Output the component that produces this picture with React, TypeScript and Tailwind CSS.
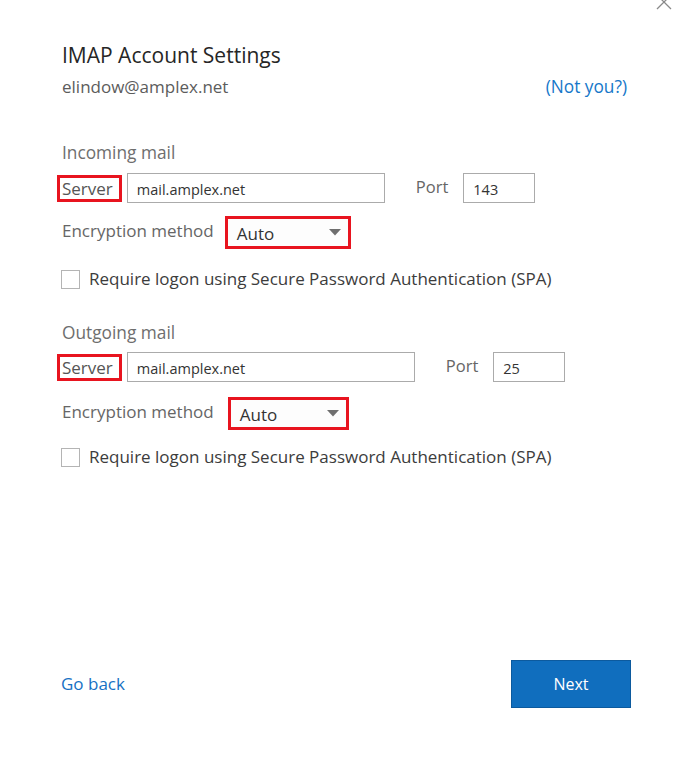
import React from "react";

const FONT = { fontFamily: '"Open Sans", "Noto Sans", "Liberation Sans", sans-serif' };

const RED = "border-[3px] border-[#e8141f]";

function ServerRow({ inputW, port }: { inputW: string; port: string }) {
  return (
    <div className="flex items-center h-[30px]">
      <div className={`-ml-[5px] flex h-[27px] items-center ${RED} pl-[2px] pr-[6px]`}>
        <span className="text-[17px] leading-none text-[#555]">Server</span>
      </div>
      <input
        readOnly
        value="mail.amplex.net"
        className={`ml-[5px] h-[30px] ${inputW} border border-[#ababab] px-[9px] pt-[2px] text-[14.5px] text-[#333] outline-none`}
      />
      <span className="ml-[31px] -mt-[2px] text-[16.5px] text-[#666]">Port</span>
      <input
        readOnly
        value={port}
        className="ml-[15px] h-[30px] w-[72px] border border-[#ababab] px-[9px] pt-[2px] text-[14.5px] text-[#333] outline-none"
      />
    </div>
  );
}

function EncryptionRow({ gap, boxW }: { gap: string; boxW: string }) {
  return (
    <div className="flex items-center">
      <span className="text-[17px] text-[#666] -mt-[3px]">Encryption method</span>
      <div className={`${gap} ${boxW} h-[33px] ${RED} flex items-center justify-between pl-[9px] pr-[7px] bg-[#fdfdfd]`}>
        <span className="text-[17px] text-[#333] pt-[2px]">Auto</span>
        <svg width="12" height="7" viewBox="0 0 12 7">
          <path d="M0 0 H12 L6 6.5 Z" fill="#6f6f6f" />
        </svg>
      </div>
    </div>
  );
}

function CheckRow() {
  return (
    <div className="flex items-center h-[20px]">
      <div className="-ml-px h-[19px] w-[19px] border border-[#b4b4b4] bg-white" />
      <span className="ml-[9px] text-[17px] text-[#3c3c3c]">
        Require logon using Secure Password Authentication (SPA)
      </span>
    </div>
  );
}

export default function App() {
  return (
    <div className="relative flex h-[775px] w-[692px] flex-col overflow-hidden bg-white" style={FONT}>
      {/* close button, clipped by the top edge */}
      <svg className="absolute left-[656px] top-[-6px]" width="16" height="16" viewBox="0 0 16 16">
        <path d="M1 1 L15 15 M15 1 L1 15" stroke="#8a8a8a" strokeWidth="1.3" />
      </svg>

      <div className="flex flex-1 flex-col pl-[62px] pr-[65px]">
        <h1 className="mt-[40px] h-[30px] text-[21px] leading-[30px] font-normal text-[#262626]">
          IMAP Account Settings
        </h1>
        <div className="mt-[6px] flex h-[22px] items-center justify-between">
          <span className="text-[17px] text-[#5c5c5c]">elindow@amplex.net</span>
          <span className="text-[17.3px] text-[#1677c9]">(Not you?)</span>
        </div>

        <div className="mt-[44px] h-[22px] text-[17.3px] leading-[22px] text-[#6e6e6e]">Incoming mail</div>
        <div className="mt-[9px]">
          <ServerRow inputW="w-[258px]" port="143" />
        </div>
        <div className="mt-[13px]">
          <EncryptionRow gap="ml-[11px]" boxW="w-[126px]" />
        </div>
        <div className="mt-[20px]">
          <CheckRow />
        </div>

        <div className="mt-[33px] h-[22px] text-[17.3px] leading-[22px] text-[#6e6e6e]">Outgoing mail</div>
        <div className="mt-[8px]">
          <ServerRow inputW="w-[288px]" port="25" />
        </div>
        <div className="mt-[15px]">
          <EncryptionRow gap="ml-[14px]" boxW="w-[121px]" />
        </div>
        <div className="mt-[17px]">
          <CheckRow />
        </div>

        <div className="mt-auto mb-[67px] flex items-center justify-between">
          <span className="-ml-px text-[17px] text-[#1671c4]">Go back</span>
          <button className="-mr-[4px] h-[48px] w-[120px] border border-[#0c5a9e] bg-[#106ebe] text-[16px] text-white">
            Next
          </button>
        </div>
      </div>
    </div>
  );
}
